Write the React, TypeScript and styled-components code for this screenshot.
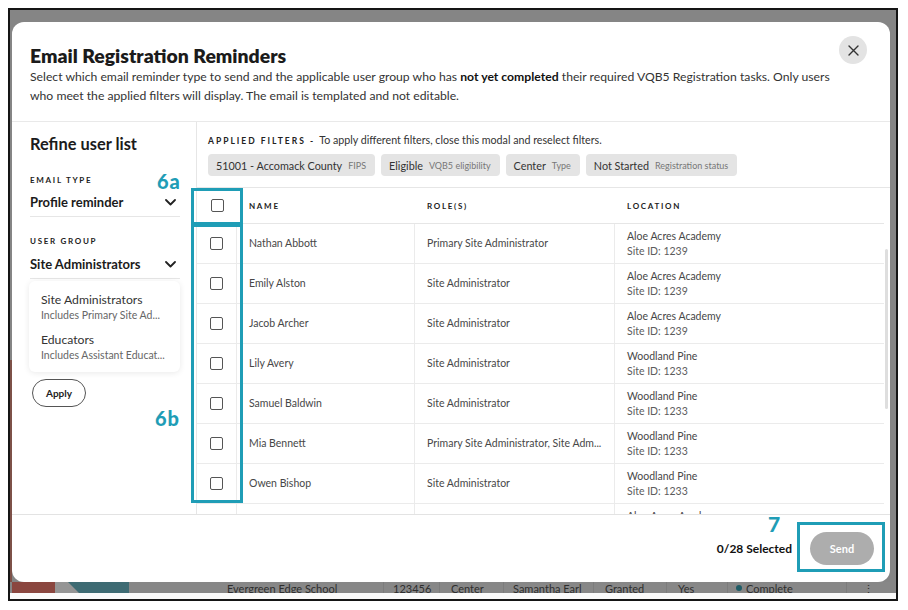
import React from 'react';
import styled, { createGlobalStyle } from 'styled-components';

const GlobalStyle = createGlobalStyle`
  * { box-sizing: border-box; }
  html, body { margin: 0; padding: 0; background: #ffffff; }
  body { font-family: Lato, "Open Sans", sans-serif; -webkit-font-smoothing: antialiased; }
`;

const ACCENT = '#1f9db6';

/* ---------- page frame & backdrop ---------- */
const Page = styled.div`
  padding: 8px;
`;

const Frame = styled.div`
  position: relative;
  width: 890px;
  height: 593px;
  border: 2px solid #151515;
  background: #fafafa;
  display: flex;
  flex-direction: column;
`;

const Backdrop = styled.div`
  display: flex;
  flex-direction: column;
  padding: 12px 6px 0 2px;
  background: linear-gradient(#7d5148, #7d5148) left 350px / 2px 222px no-repeat, #858585;
`;

/* ---------- modal ---------- */
const Modal = styled.section`
  width: 878px;
  height: 560px;
  background: #ffffff;
  border-radius: 12px;
  display: flex;
  flex-direction: column;
  overflow: hidden;
  color: #222;
`;

const Header = styled.header`
  display: flex;
  align-items: flex-start;
  justify-content: space-between;
  padding: 23px 23px 16px 18px;
  border-bottom: 1px solid #e9e9e9;
`;

const Title = styled.h1`
  margin: 0;
  font-size: 19.4px;
  line-height: 22px;
  font-weight: 800;
  color: #1b1b1b;
`;

const Description = styled.p`
  margin: 0;
  font-size: 12.2px;
  line-height: 19px;
  color: #333;
  white-space: nowrap;
  b { font-weight: 700; color: #111; }
`;

const CloseButton = styled.button`
  flex-shrink: 0;
  width: 28px;
  height: 28px;
  margin-top: -9px;
  padding: 0;
  border: 0;
  border-radius: 50%;
  background: #e3e3e3;
  display: grid;
  place-items: center;
  cursor: pointer;
`;

const Body = styled.div`
  flex: 1;
  min-height: 0;
  display: flex;
`;

/* ---------- sidebar ---------- */
const Sidebar = styled.aside`
  width: 185px;
  flex-shrink: 0;
  border-right: 1px solid #e6e6e6;
  padding: 12px 16px 0 18px;
  display: flex;
  flex-direction: column;
  align-items: stretch;
`;

const SideTitle = styled.h2`
  margin: 0;
  font-size: 16.4px;
  line-height: 20px;
  font-weight: 700;
  color: #1b1b1b;
`;

const FieldLabel = styled.div<{ $gap: number }>`
  margin-top: ${(p) => p.$gap}px;
  font-size: 8px;
  line-height: 12px;
  font-weight: 700;
  letter-spacing: 1.7px;
  color: #222;
`;

const SelectRow = styled.div<{ $gap: number }>`
  margin-top: ${(p) => p.$gap}px;
  display: flex;
  align-items: center;
  justify-content: space-between;
  padding: 0 4px 6px 0;
  border-bottom: 1px solid #e6e6e6;
  font-size: 13px;
  line-height: 16px;
  font-weight: 700;
  color: #1b1b1b;
`;

const OptionPanel = styled.div`
  margin: 2px 0 0 -1px;
  padding: 11px 10px 10px 12px;
  background: #fff;
  border-radius: 6px;
  box-shadow: 0 1px 6px rgba(0, 0, 0, 0.09);
  display: flex;
  flex-direction: column;
  gap: 10px;
`;

const Option = styled.div`
  display: flex;
  flex-direction: column;
  min-width: 0;
`;

const OptionName = styled.span`
  font-size: 12.2px;
  line-height: 16px;
  color: #333;
`;

const OptionHint = styled.span`
  font-size: 10.5px;
  line-height: 14px;
  color: #666;
  white-space: nowrap;
`;

const ApplyButton = styled.button`
  align-self: flex-start;
  margin: 7px 0 0 2px;
  width: 54px;
  height: 28px;
  border: 1px solid #555;
  border-radius: 14px;
  background: #fff;
  font-family: inherit;
  font-size: 10px;
  font-weight: 700;
  color: #222;
  padding: 0;
`;

/* ---------- main panel ---------- */
const Main = styled.div`
  flex: 1;
  min-width: 0;
  display: flex;
  flex-direction: column;
`;

const FiltersBar = styled.div`
  padding: 11px 12px 11px 11px;
`;

const FilterNote = styled.div`
  font-size: 10.7px;
  line-height: 14px;
  color: #333;
  white-space: nowrap;
`;

const NoteLabel = styled.span`
  font-size: 8.5px;
  font-weight: 700;
  letter-spacing: 2px;
  color: #222;
  margin-right: 4px;
`;

const ChipRow = styled.div`
  display: flex;
  gap: 6px;
  margin-top: 6px;
`;

const Chip = styled.span`
  display: inline-flex;
  align-items: center;
  gap: 6px;
  height: 22px;
  padding: 0 9px 0 8px;
  background: #e4e4e4;
  border-radius: 4px;
  font-size: 10.8px;
  color: #333;
`;

const ChipSub = styled.span`
  font-size: 9px;
  color: #777;
`;

const TableArea = styled.div`
  flex: 1;
  min-height: 0;
  display: flex;
  border-top: 1px solid #e6e6e6;
`;

const TableScroll = styled.div`
  flex: 1;
  min-width: 0;
  overflow: hidden;
`;

const ScrollGutter = styled.div`
  width: 6px;
  flex-shrink: 0;
`;

const ScrollThumb = styled.div`
  margin: 61px 0 0 1px;
  width: 3px;
  height: 160px;
  border-radius: 2px;
  background: #dedede;
`;

const GRID = '40px 178px 200px 1fr';

const HeadRow = styled.div`
  display: grid;
  grid-template-columns: ${GRID};
  height: 36px;
  border-bottom: 1px solid #e6e6e6;
`;

const HeadCell = styled.div<{ $center?: boolean }>`
  display: flex;
  align-items: center;
  justify-content: ${(p) => (p.$center ? 'center' : 'flex-start')};
  padding: ${(p) => (p.$center ? '0' : '0 12px')};
  font-size: 8px;
  font-weight: 700;
  letter-spacing: 1.7px;
  color: #222;
`;

const Row = styled.div`
  display: grid;
  grid-template-columns: ${GRID};
  height: 40px;
  border-bottom: 1px solid #ebebeb;
`;

const Cell = styled.div<{ $center?: boolean; $divider?: boolean; $stack?: boolean }>`
  display: flex;
  flex-direction: ${(p) => (p.$stack ? 'column' : 'row')};
  align-items: ${(p) => (p.$stack ? 'flex-start' : 'center')};
  justify-content: ${(p) => (p.$center || p.$stack ? 'center' : 'flex-start')};
  padding: ${(p) => (p.$center ? '0' : '0 12px')};
  border-right: ${(p) => (p.$divider ? '1px solid #ebebeb' : '0')};
  font-size: 10.5px;
  line-height: 15px;
  color: #474747;
  white-space: nowrap;
  overflow: hidden;
`;

const SubLine = styled.span`
  color: #5c5c5c;
`;

const Checkbox = styled.span`
  display: block;
  width: 13px;
  height: 13px;
  border: 1.5px solid #555;
  border-radius: 2px;
  background: #fff;
`;

/* ---------- footer ---------- */
const Footer = styled.footer`
  height: 68px;
  flex-shrink: 0;
  border-top: 1px solid #e3e3e3;
  display: flex;
  align-items: center;
  justify-content: flex-end;
  gap: 18px;
  padding-right: 16px;
`;

const SelectedCount = styled.span`
  font-size: 12px;
  font-weight: 700;
  color: #111;
`;

const SendButton = styled.button`
  width: 64px;
  height: 33px;
  border: 0;
  border-radius: 17px;
  background: #adadad;
  color: #fff;
  font-family: inherit;
  font-size: 11px;
  font-weight: 700;
  padding: 0;
`;

/* ---------- dimmed page row under the modal ---------- */
const BackRow = styled.div`
  height: 11px;
  display: flex;
  overflow: hidden;
  background: #878787;
`;

const BackCell = styled.div<{ $w: number; $pad?: number; $line?: boolean }>`
  width: ${(p) => p.$w}px;
  flex-shrink: 0;
  padding-left: ${(p) => p.$pad ?? 10}px;
  border-left: ${(p) => (p.$line ? '1px solid #7c7c7c' : '0')};
  display: flex;
  align-items: flex-start;
  gap: 4px;
  font-size: 11px;
  line-height: 13px;
  color: #2e2e2e;
  white-space: nowrap;
`;

const BackLink = styled.span`
  text-decoration: underline;
`;

const StatusDot = styled.span`
  width: 6px;
  height: 6px;
  margin-top: 3px;
  border-radius: 50%;
  background: #1f5c66;
`;

/* ---------- callout markers ---------- */
const CalloutBox = styled.div<{ $x: number; $y: number; $w: number; $h: number }>`
  position: absolute;
  left: ${(p) => p.$x}px;
  top: ${(p) => p.$y}px;
  width: ${(p) => p.$w}px;
  height: ${(p) => p.$h}px;
  border: 3px solid ${ACCENT};
  pointer-events: none;
`;

const CalloutLabel = styled.span<{ $x: number; $y: number; $size: number }>`
  position: absolute;
  left: ${(p) => p.$x}px;
  top: ${(p) => p.$y}px;
  font-size: ${(p) => p.$size}px;
  line-height: 1;
  font-weight: 900;
  letter-spacing: 1px;
  color: ${ACCENT};
`;

const Chevron = () => (
  <svg width="11" height="7" viewBox="0 0 11 7" aria-hidden>
    <path d="M1 1l4.5 4.5L10 1" fill="none" stroke="#222" strokeWidth="1.8" strokeLinecap="round" strokeLinejoin="round" />
  </svg>
);

const CloseIcon = () => (
  <svg width="11" height="11" viewBox="0 0 11 11" aria-hidden>
    <path d="M1 1l9 9M10 1l-9 9" stroke="#333" strokeWidth="1.4" strokeLinecap="round" />
  </svg>
);

const BannerArt = () => (
  <svg width="117" height="11" viewBox="0 0 117 11" aria-hidden>
    <rect x="0" y="0" width="43" height="11" fill="#8a463f" />
    <rect x="43" y="0" width="74" height="11" fill="#959595" />
    <polygon points="56,0 117,0 117,11 67,11" fill="#3e6b73" />
  </svg>
);

const filters = [
  { value: '51001 - Accomack County', kind: 'FIPS' },
  { value: 'Eligible', kind: 'VQB5 eligibility' },
  { value: 'Center', kind: 'Type' },
  { value: 'Not Started', kind: 'Registration status' },
];

const users = [
  { name: 'Nathan Abbott', role: 'Primary Site Administrator', site: 'Aloe Acres Academy', id: '1239' },
  { name: 'Emily Alston', role: 'Site Administrator', site: 'Aloe Acres Academy', id: '1239' },
  { name: 'Jacob Archer', role: 'Site Administrator', site: 'Aloe Acres Academy', id: '1239' },
  { name: 'Lily Avery', role: 'Site Administrator', site: 'Woodland Pine', id: '1233' },
  { name: 'Samuel Baldwin', role: 'Site Administrator', site: 'Woodland Pine', id: '1233' },
  { name: 'Mia Bennett', role: 'Primary Site Administrator, Site Adm...', site: 'Woodland Pine', id: '1233' },
  { name: 'Owen Bishop', role: 'Site Administrator', site: 'Woodland Pine', id: '1233' },
  { name: 'Sophia Blake', role: 'Site Administrator', site: 'Aloe Acres Academy', id: '1239' },
];

export default function App() {
  return (
    <>
      <GlobalStyle />
      <Page>
        <Frame>
          <Backdrop>
            <Modal>
              <Header>
                <div>
                  <Title>Email Registration Reminders</Title>
                  <Description>
                    Select which email reminder type to send and the applicable user group who has{' '}
                    <b>not yet completed</b> their required VQB5 Registration tasks. Only users
                    <br />
                    who meet the applied filters will display. The email is templated and not editable.
                  </Description>
                </div>
                <CloseButton aria-label="Close">
                  <CloseIcon />
                </CloseButton>
              </Header>

              <Body>
                <Sidebar>
                  <SideTitle>Refine user list</SideTitle>
                  <FieldLabel $gap={20}>EMAIL TYPE</FieldLabel>
                  <SelectRow $gap={8}>
                    Profile reminder
                    <Chevron />
                  </SelectRow>
                  <FieldLabel $gap={18}>USER GROUP</FieldLabel>
                  <SelectRow $gap={9}>
                    Site Administrators
                    <Chevron />
                  </SelectRow>
                  <OptionPanel>
                    <Option>
                      <OptionName>Site Administrators</OptionName>
                      <OptionHint>Includes Primary Site Ad...</OptionHint>
                    </Option>
                    <Option>
                      <OptionName>Educators</OptionName>
                      <OptionHint>Includes Assistant Educat...</OptionHint>
                    </Option>
                  </OptionPanel>
                  <ApplyButton>Apply</ApplyButton>
                </Sidebar>

                <Main>
                  <FiltersBar>
                    <FilterNote>
                      <NoteLabel>APPLIED FILTERS -</NoteLabel>
                      To apply different filters, close this modal and reselect filters.
                    </FilterNote>
                    <ChipRow>
                      {filters.map((f) => (
                        <Chip key={f.value}>
                          {f.value}
                          <ChipSub>{f.kind}</ChipSub>
                        </Chip>
                      ))}
                    </ChipRow>
                  </FiltersBar>

                  <TableArea>
                    <TableScroll>
                      <HeadRow>
                        <HeadCell $center>
                          <Checkbox />
                        </HeadCell>
                        <HeadCell>NAME</HeadCell>
                        <HeadCell>ROLE(S)</HeadCell>
                        <HeadCell>LOCATION</HeadCell>
                      </HeadRow>
                      {users.map((u) => (
                        <Row key={u.name}>
                          <Cell $center $divider>
                            <Checkbox />
                          </Cell>
                          <Cell $divider>{u.name}</Cell>
                          <Cell $divider>{u.role}</Cell>
                          <Cell $stack>
                            <span>{u.site}</span>
                            <SubLine>Site ID: {u.id}</SubLine>
                          </Cell>
                        </Row>
                      ))}
                    </TableScroll>
                    <ScrollGutter>
                      <ScrollThumb />
                    </ScrollGutter>
                  </TableArea>
                </Main>
              </Body>

              <Footer>
                <SelectedCount>0/28 Selected</SelectedCount>
                <SendButton disabled>Send</SendButton>
              </Footer>
            </Modal>

            <BackRow>
              <BackCell $w={117} $pad={0}>
                <BannerArt />
              </BackCell>
              <BackCell $w={88} />
              <BackCell $w={166}>
                <BackLink>Evergreen Edge School</BackLink>
              </BackCell>
              <BackCell $w={56} $line $pad={9}>123456</BackCell>
              <BackCell $w={64} $line $pad={11}>Center</BackCell>
              <BackCell $w={90} $line $pad={9}>Samantha Earl</BackCell>
              <BackCell $w={73} $line $pad={11}>Granted</BackCell>
              <BackCell $w={61} $line $pad={11}>Yes</BackCell>
              <BackCell $w={119} $line $pad={8}>
                <StatusDot />
                Complete
              </BackCell>
              <BackCell $w={42} $line $pad={16}>⋮</BackCell>
            </BackRow>
          </Backdrop>

          <CalloutBox $x={181} $y={178} $w={52} $h={37} />
          <CalloutBox $x={181} $y={214} $w={52} $h={279} />
          <CalloutBox $x={787} $y={512} $w={88} $h={50} />
          <CalloutLabel $x={147} $y={161} $size={20}>6a</CalloutLabel>
          <CalloutLabel $x={145} $y={398} $size={20}>6b</CalloutLabel>
          <CalloutLabel $x={758} $y={503} $size={21}>7</CalloutLabel>
        </Frame>
      </Page>
    </>
  );
}
